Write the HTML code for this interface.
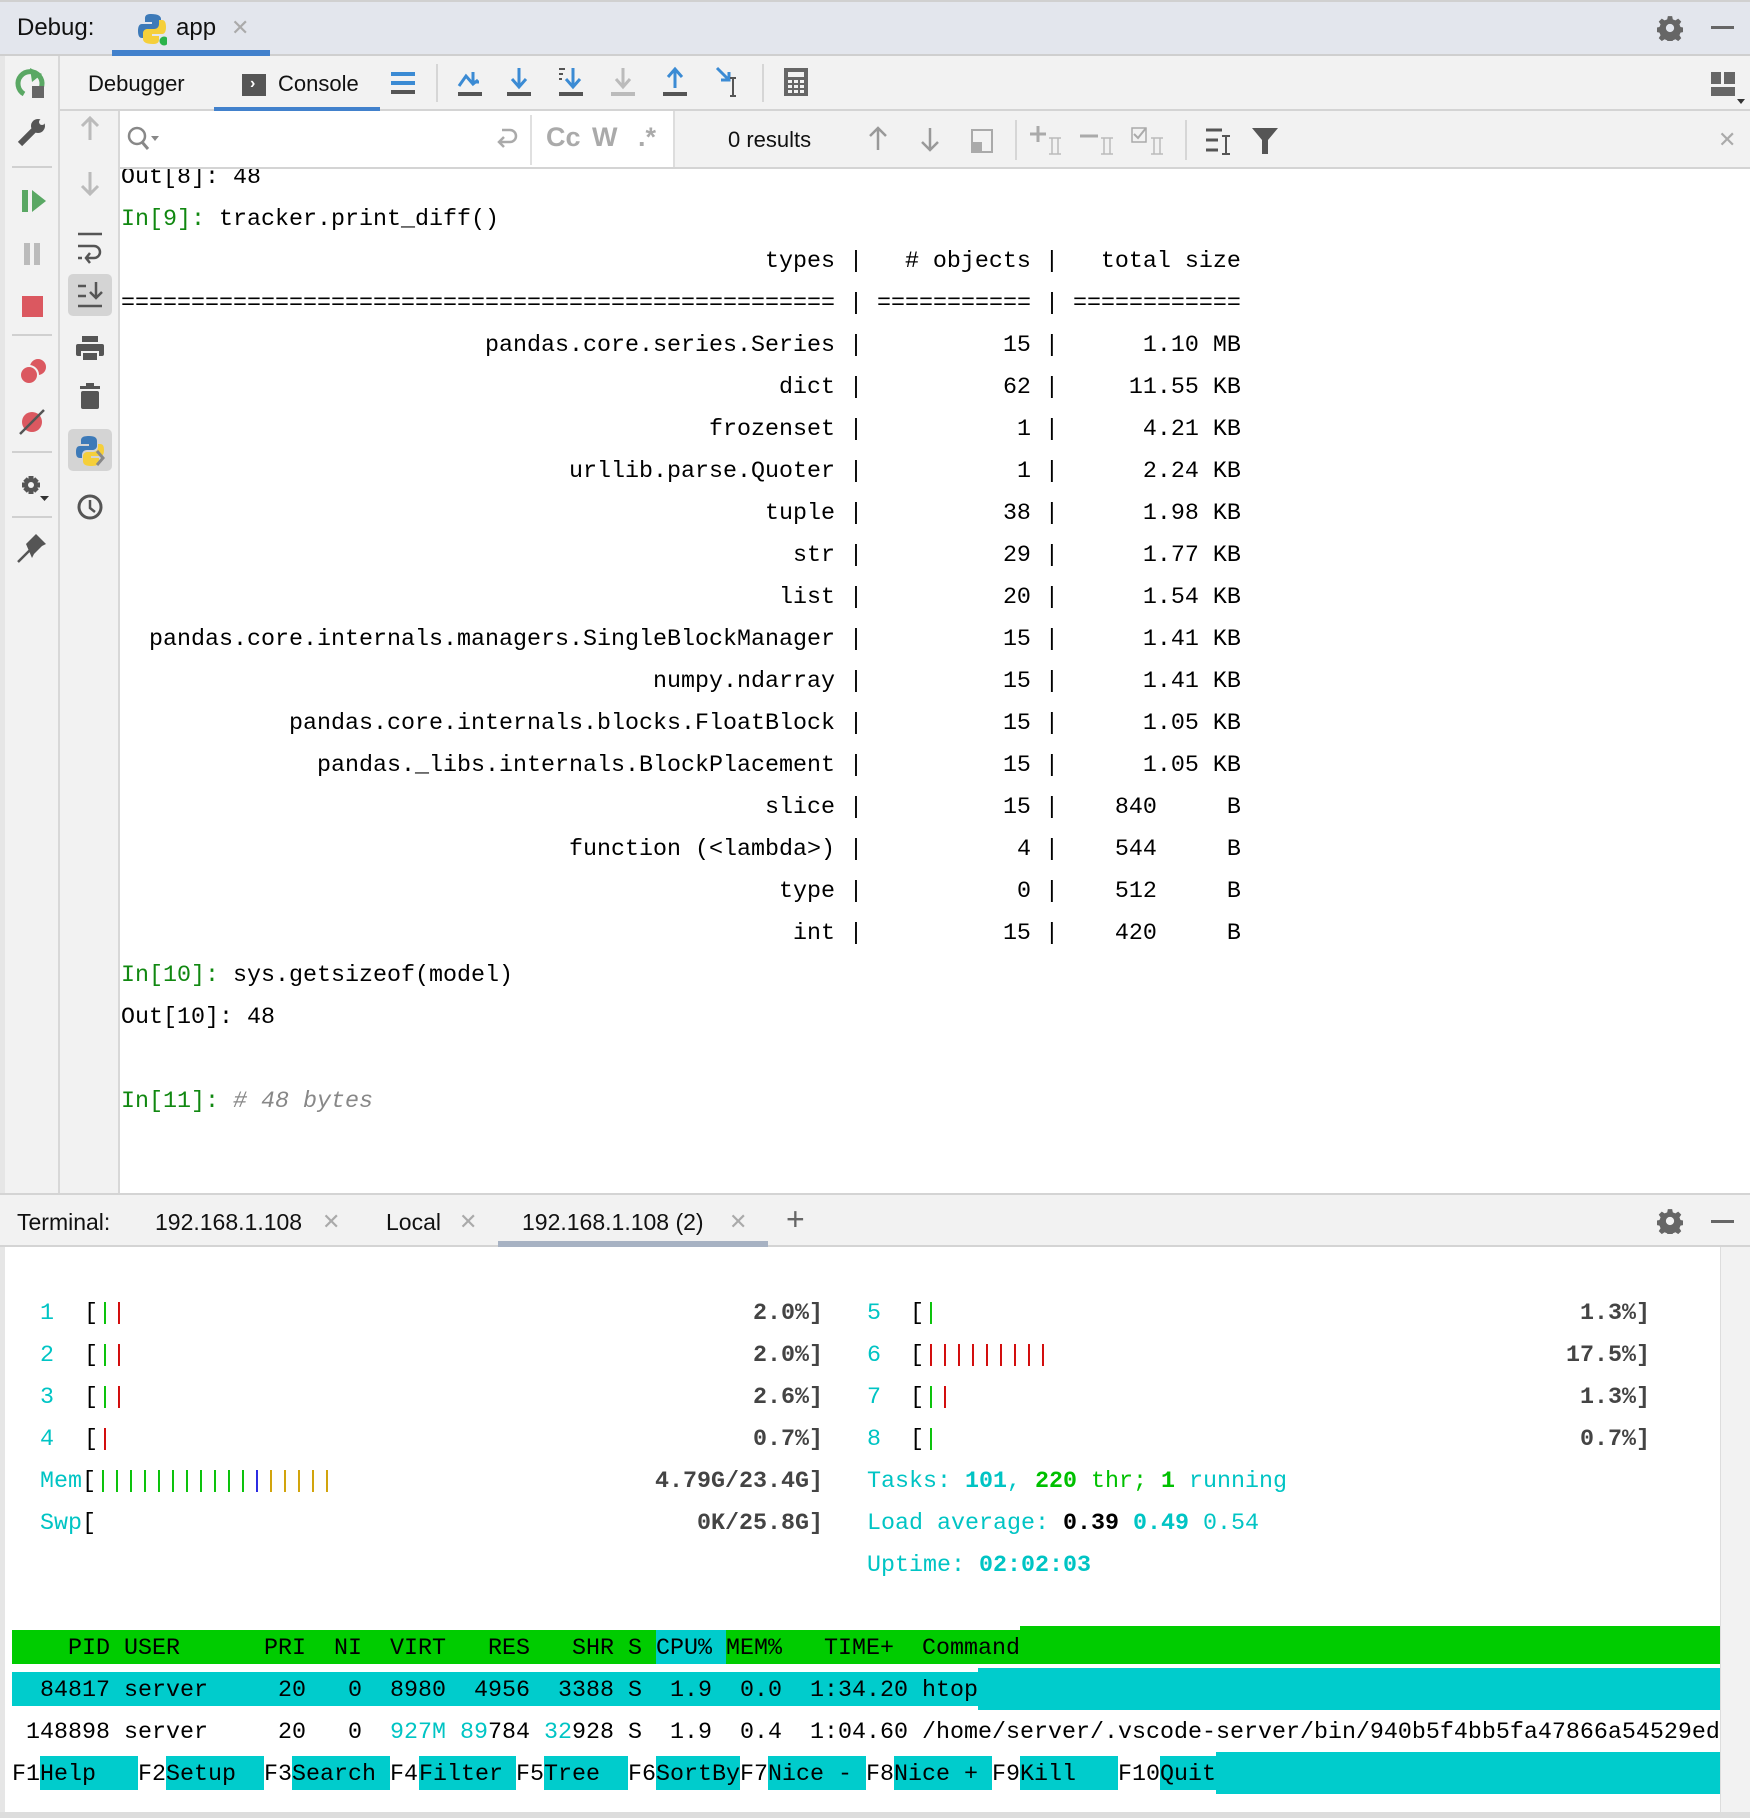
<!DOCTYPE html>
<html><head><meta charset="utf-8"><style>
*{margin:0;padding:0;box-sizing:border-box}
body{width:1750px;height:1818px;position:relative;background:#fff;overflow:hidden;font-family:"Liberation Sans",sans-serif}
.a{position:absolute}
.m{font-family:"Liberation Mono",monospace;font-size:23.33px;white-space:pre;line-height:42px;height:42px;position:absolute}
.ui{font-size:23px;color:#111;position:absolute;line-height:30px}
.g{color:#118811}.cy{color:#00c4c4}.gr{color:#00c000}.rd{color:#d00000}.b{font-weight:bold}
.pc{color:#444}
.x{color:#aaa;font-size:22px}
.r{display:flex}
.r .t{display:inline-block;width:51ch;text-align:right}
.r .o{display:inline-block;width:11ch;text-align:right}
</style></head><body>
<!-- top tab bar -->
<div class="a" style="left:0;top:0;width:1750px;height:56px;background:#e3e6ed;border-top:2px solid #d0d0d0;border-bottom:2px solid #cfcfcf"></div>
<div class="ui" style="left:17px;top:13px;font-size:24px">Debug:</div>
<svg class="a" style="left:137px;top:12px" width="30" height="34" viewBox="0 0 30 34"><path d="M14 2c-6 0-6 3-6 5v3h7v2H5c-3 0-4 3-4 7s1 7 4 7h3v-4c0-3 2-5 5-5h7c2 0 4-2 4-4V7c0-3-3-5-10-5z" fill="#3d7ab8"/><path d="M16 32c6 0 6-3 6-5v-3h-7v-2h10c3 0 4-3 4-7s-1-7-4-7h-3v4c0 3-2 5-5 5h-7c-2 0-4 2-4 4v6c0 3 3 5 10 5z" fill="#f5cf3a"/><circle cx="27" cy="29" r="4.5" fill="#2ab34a"/></svg>
<div class="ui" style="left:176px;top:13px;font-size:24px">app</div>
<div class="ui x" style="left:231px;top:13px">✕</div>
<div class="a" style="left:112px;top:50px;width:158px;height:6px;background:#4281cc"></div>
<svg class="a" style="left:1657px;top:15px" width="26" height="26" viewBox="0 0 24 24"><path d="M10 1h4l.6 3 2.4 1 2.6-1.7 2.8 2.8-1.7 2.6 1 2.4 3 .6v4l-3 .6-1 2.4 1.7 2.6-2.8 2.8-2.6-1.7-2.4 1-.6 3h-4l-.6-3-2.4-1-2.6 1.7-2.8-2.8 1.7-2.6-1-2.4-3-.6v-4l3-.6 1-2.4L1.6 6.1 4.4 3.3 7 5l2.4-1z" fill="#666"/><circle cx="12" cy="12" r="3.8" fill="#e3e6ed"/></svg>
<div class="a" style="left:1711px;top:26px;width:23px;height:3px;background:#666"></div>

<!-- toolbar row -->
<div class="a" style="left:0;top:56px;width:1750px;height:55px;background:#f2f2f2;border-bottom:2px solid #d4d4d4"></div>
<div class="ui" style="left:88px;top:69px;font-size:22px">Debugger</div>
<div class="a" style="left:242px;top:74px;width:24px;height:22px;background:#555"></div>
<div class="a" style="left:250px;top:75px;color:#fff;font-size:16px;font-weight:bold">›</div>
<div class="ui" style="left:278px;top:69px;font-size:22px">Console</div>
<div class="a" style="left:214px;top:107px;width:166px;height:4px;background:#4281cc"></div>
<svg class="a" style="left:390px;top:70px" width="26" height="26"><rect x="1" y="2" width="24" height="4" fill="#3b8bd4"/><rect x="1" y="11" width="24" height="4" fill="#3b8bd4"/><rect x="1" y="20" width="24" height="4" fill="#555"/></svg>
<div class="a" style="left:436px;top:64px;width:2px;height:38px;background:#d6d6d6"></div>
<svg class="a" style="left:455px;top:66px" width="300" height="34">
<g fill="none" stroke="#3b8bd4" stroke-width="3"><path d="M4 20l7-10 7 8 5-4"/><path d="M18 6v10h6"/></g><rect x="3" y="26" width="24" height="4" fill="#555"/>
<g transform="translate(52,0)"><path d="M12 2v18M5 13l7 8 7-8" stroke="#3b8bd4" stroke-width="3" fill="none"/><rect x="0" y="26" width="24" height="4" fill="#555"/></g>
<g transform="translate(104,0)"><path d="M14 2v18M7 13l7 8 7-8" stroke="#3b8bd4" stroke-width="3" fill="none"/><path d="M0 3h6M0 8h4M0 13h3" stroke="#555" stroke-width="2"/><rect x="0" y="26" width="24" height="4" fill="#555"/></g>
<g transform="translate(156,0)"><path d="M12 2v18M5 13l7 8 7-8" stroke="#bbb" stroke-width="3" fill="none"/><rect x="0" y="26" width="24" height="4" fill="#bbb"/></g>
<g transform="translate(208,0)"><path d="M12 22V4M5 11l7-8 7 8" stroke="#3b8bd4" stroke-width="3" fill="none"/><rect x="0" y="26" width="24" height="4" fill="#555"/></g>
<g transform="translate(260,0)"><path d="M2 2l12 12M6 14h8V6" stroke="#3b8bd4" stroke-width="3" fill="none"/><path d="M18 12v18M15 12h6M15 30h6" stroke="#555" stroke-width="2"/></g>
</svg>
<div class="a" style="left:762px;top:64px;width:2px;height:38px;background:#d6d6d6"></div>
<svg class="a" style="left:784px;top:68px" width="24" height="28"><rect x="0" y="0" width="24" height="28" fill="#666"/><rect x="4" y="4" width="16" height="5" fill="#f2f2f2"/><g fill="#f2f2f2"><rect x="4" y="12" width="4" height="3"/><rect x="10" y="12" width="4" height="3"/><rect x="16" y="12" width="4" height="3"/><rect x="4" y="17" width="4" height="3"/><rect x="10" y="17" width="4" height="3"/><rect x="16" y="17" width="4" height="3"/><rect x="4" y="22" width="4" height="3"/><rect x="10" y="22" width="4" height="3"/><rect x="16" y="22" width="4" height="3"/></g></svg>
<svg class="a" style="left:1711px;top:70px" width="36" height="34"><rect x="0" y="2" width="10" height="12" fill="#666"/><rect x="13" y="2" width="11" height="12" fill="#666"/><rect x="0" y="17" width="24" height="9" fill="#666"/><path d="M26 29h8l-4 5z" fill="#333"/></svg>

<!-- search row -->
<div class="a" style="left:120px;top:111px;width:1630px;height:58px;background:#f2f2f2;border-bottom:2px solid #d4d4d4"></div>
<div class="a" style="left:120px;top:111px;width:555px;height:56px;background:#fff;border-right:2px solid #ddd"></div>
<div class="a" style="left:530px;top:115px;width:2px;height:50px;background:#e0e0e0"></div>
<svg class="a" style="left:127px;top:126px" width="36" height="28"><circle cx="10" cy="10" r="8" stroke="#888" stroke-width="2.5" fill="none"/><path d="M15 16l6 7" stroke="#888" stroke-width="3"/><path d="M24 10h8l-4 5z" fill="#888"/></svg>
<svg class="a" style="left:494px;top:126px" width="26" height="28"><path d="M8 4h8a6 6 0 0 1 0 12H6M10 11l-5 5 5 5" stroke="#aaa" stroke-width="2.5" fill="none"/></svg>
<div class="a" style="left:546px;top:122px;color:#aaa;font-size:27px;font-weight:bold">Cc</div>
<div class="a" style="left:592px;top:122px;color:#aaa;font-size:27px;font-weight:bold">W</div>
<div class="a" style="left:638px;top:122px;color:#aaa;font-size:27px;font-weight:bold">.*</div>
<div class="ui" style="left:728px;top:125px;font-size:22px">0 results</div>
<svg class="a" style="left:866px;top:124px" width="500" height="32">
<path d="M12 26V4M4 12l8-8 8 8" stroke="#999" stroke-width="2.5" fill="none"/>
<path d="M64 4v22M56 18l8 8 8-8" stroke="#999" stroke-width="2.5" fill="none"/>
<rect x="106" y="6" width="20" height="22" stroke="#aaa" stroke-width="2" fill="none"/><rect x="106" y="18" width="10" height="10" fill="#aaa"/>
<path d="M172 2v16M164 10h16" stroke="#aaa" stroke-width="3"/><path d="M186 14v16M192 14v16M183 14h12M183 30h12" stroke="#bbb" stroke-width="1.5"/>
<path d="M214 12h18" stroke="#aaa" stroke-width="3"/><path d="M238 14v16M244 14v16M235 14h12M235 30h12" stroke="#bbb" stroke-width="1.5"/>
<rect x="266" y="4" width="14" height="14" stroke="#aaa" stroke-width="1.5" fill="none"/><path d="M268 10l4 4 8-10" stroke="#aaa" stroke-width="2" fill="none"/><path d="M288 14v16M294 14v16M285 14h12M285 30h12" stroke="#bbb" stroke-width="1.5"/>
<path d="M340 6h16M340 16h12M340 26h12" stroke="#555" stroke-width="3"/><path d="M360 12v18M356 12h8M356 30h8" stroke="#555" stroke-width="2"/>
<path d="M386 4h26l-10 12v14h-6V16z" fill="#555"/>
</svg>
<div class="a" style="left:1015px;top:120px;width:2px;height:40px;background:#d6d6d6"></div>
<div class="a" style="left:1185px;top:120px;width:2px;height:40px;background:#d6d6d6"></div>
<div class="ui x" style="left:1718px;top:125px;font-size:22px">✕</div>

<!-- left columns -->
<div class="a" style="left:0;top:56px;width:60px;height:1137px;background:#f2f2f2;border-left:5px solid #e6e6e6;border-right:2px solid #d8d8d8"></div>
<div class="a" style="left:60px;top:111px;width:60px;height:1082px;background:#f2f2f2;border-right:2px solid #d8d8d8"></div>
<svg class="a" style="left:0;top:60px" width="120" height="530">
<path d="M24 34a12 12 0 1 1 12 0" stroke="#5aa864" stroke-width="5" fill="none"/><path d="M30 8l12 6-10 8z" fill="#5aa864"/><rect x="32" y="26" width="12" height="12" fill="#666"/>
<path d="M20 84l16-16" stroke="#555" stroke-width="6"/><circle cx="38" cy="66" r="7" fill="#555"/><circle cx="42" cy="62" r="3" fill="#f2f2f2"/>
<rect x="12" y="106" width="40" height="2" fill="#d0d0d0"/>
<rect x="22" y="130" width="6" height="22" fill="#5aa864"/><path d="M32 130l14 11-14 11z" fill="#5aa864"/>
<rect x="24" y="183" width="6" height="22" fill="#bbb"/><rect x="34" y="183" width="6" height="22" fill="#bbb"/>
<rect x="22" y="236" width="21" height="21" fill="#db5860"/>
<rect x="12" y="274" width="40" height="2" fill="#d0d0d0"/>
<circle cx="38" cy="307" r="8" fill="#db5860"/><circle cx="29" cy="315" r="9" fill="#db5860" stroke="#f2f2f2" stroke-width="2"/>
<circle cx="32" cy="362" r="10" fill="#db5860"/><path d="M20 374l24-24" stroke="#555" stroke-width="2.5"/>
<rect x="12" y="391" width="40" height="2" fill="#d0d0d0"/>
<path d="M31 416v18M22 425h18M25 419l12 12M37 419l-12 12" stroke="#555" stroke-width="5"/><circle cx="31" cy="425" r="7" fill="#555"/><circle cx="31" cy="425" r="3" fill="#f2f2f2"/><path d="M40 436h9l-4.5 5z" fill="#333"/>
<rect x="12" y="456" width="40" height="2" fill="#d0d0d0"/>
<path d="M18 502l12-12" stroke="#555" stroke-width="2.5"/><path d="M26 484l10-10 10 10-4 2-8 8-2 4z" fill="#555"/>
<path d="M90 80V58M82 66l8-8 8 8" stroke="#bbb" stroke-width="3" fill="none"/>
<path d="M90 112v22M82 126l8 8 8-8" stroke="#bbb" stroke-width="3" fill="none"/>
<path d="M78 174h24M78 186h16a6 6 0 0 1 0 12h-8M90 193l-4 5 4 5M78 198h4" stroke="#555" stroke-width="2.5" fill="none"/>
<rect x="68" y="214" width="44" height="42" rx="5" fill="#d4d4d4"/><path d="M78 226h8M78 236h8M78 246h24M96 222v16M90 232l6 6 6-6" stroke="#555" stroke-width="2.5" fill="none"/>
<rect x="82" y="276" width="16" height="6" fill="#555"/><rect x="76" y="284" width="28" height="12" rx="2" fill="#555"/><rect x="82" y="292" width="16" height="9" fill="#555" stroke="#f2f2f2" stroke-width="2"/>
<rect x="80" y="326" width="20" height="3" fill="#555"/><rect x="86" y="323" width="8" height="3" fill="#555"/><rect x="81" y="331" width="18" height="18" rx="2" fill="#555"/>
<rect x="68" y="369" width="44" height="42" rx="5" fill="#d4d4d4"/><path d="M89 376c-7 0-8 2-8 5v3h8v2h-9c-3 0-4 2-4 6s1 6 4 6h2v-3c0-3 2-5 5-5h6c2 0 4-2 4-4v-5c0-3-2-5-8-5z" fill="#3d7ab8"/><path d="M91 406c7 0 8-2 8-5v-3h-8v-2h9c3 0 4-2 4-6s-1-6-4-6h-2v3c0 3-2 5-5 5h-6c-2 0-4 2-4 4v5c0 3 2 5 8 5z" fill="#f5cf3a"/><path d="M97 391l6 7-6 7" stroke="#888" stroke-width="3" fill="none"/>
<circle cx="90" cy="447" r="11" stroke="#555" stroke-width="3" fill="none"/><path d="M90 440v8l5 4" stroke="#555" stroke-width="2.5" fill="none"/>
</svg>

<!-- console -->
<div class="a" style="left:120px;top:169px;width:1630px;height:1024px;overflow:hidden">
<div class="m" style="left:1px;top:-12px">Out[8]: 48</div>
<div class="m" style="left:1px;top:30px"><span class="g">In[9]: </span>tracker.print_diff()</div>
<div class="m r" style="left:1px;top:72px"><span class="t">types</span> | <span class="o"># objects</span> |   total size</div>
<div class="m" style="left:1px;top:114px">=================================================== | =========== | ============</div>
<div class="m r" style="left:1px;top:156px"><span class="t">pandas.core.series.Series</span> | <span class="o">15</span> |      1.10 MB</div>
<div class="m r" style="left:1px;top:198px"><span class="t">dict</span> | <span class="o">62</span> |     11.55 KB</div>
<div class="m r" style="left:1px;top:240px"><span class="t">frozenset</span> | <span class="o">1</span> |      4.21 KB</div>
<div class="m r" style="left:1px;top:282px"><span class="t">urllib.parse.Quoter</span> | <span class="o">1</span> |      2.24 KB</div>
<div class="m r" style="left:1px;top:324px"><span class="t">tuple</span> | <span class="o">38</span> |      1.98 KB</div>
<div class="m r" style="left:1px;top:366px"><span class="t">str</span> | <span class="o">29</span> |      1.77 KB</div>
<div class="m r" style="left:1px;top:408px"><span class="t">list</span> | <span class="o">20</span> |      1.54 KB</div>
<div class="m r" style="left:1px;top:450px"><span class="t">pandas.core.internals.managers.SingleBlockManager</span> | <span class="o">15</span> |      1.41 KB</div>
<div class="m r" style="left:1px;top:492px"><span class="t">numpy.ndarray</span> | <span class="o">15</span> |      1.41 KB</div>
<div class="m r" style="left:1px;top:534px"><span class="t">pandas.core.internals.blocks.FloatBlock</span> | <span class="o">15</span> |      1.05 KB</div>
<div class="m r" style="left:1px;top:576px"><span class="t">pandas._libs.internals.BlockPlacement</span> | <span class="o">15</span> |      1.05 KB</div>
<div class="m r" style="left:1px;top:618px"><span class="t">slice</span> | <span class="o">15</span> |    840     B</div>
<div class="m r" style="left:1px;top:660px"><span class="t">function (&lt;lambda&gt;)</span> | <span class="o">4</span> |    544     B</div>
<div class="m r" style="left:1px;top:702px"><span class="t">type</span> | <span class="o">0</span> |    512     B</div>
<div class="m r" style="left:1px;top:744px"><span class="t">int</span> | <span class="o">15</span> |    420     B</div>
<div class="m" style="left:1px;top:786px"><span class="g">In[10]: </span>sys.getsizeof(model)</div>
<div class="m" style="left:1px;top:828px">Out[10]: 48</div>
<div class="m" style="left:1px;top:912px"><span class="g">In[11]: </span><i style="color:#888"># 48 bytes</i></div>
</div>

<!-- terminal tabs -->
<div class="a" style="left:0;top:1193px;width:1750px;height:54px;background:#f2f2f2;border-top:2px solid #d4d4d4;border-bottom:2px solid #d4d4d4"></div>
<div class="ui" style="left:17px;top:1207px;font-size:23px">Terminal:</div>
<div class="ui" style="left:155px;top:1207px;font-size:23px">192.168.1.108</div>
<div class="ui x" style="left:322px;top:1207px">✕</div>
<div class="ui" style="left:386px;top:1207px;font-size:23px">Local</div>
<div class="ui x" style="left:459px;top:1207px">✕</div>
<div class="ui" style="left:522px;top:1207px;font-size:23px">192.168.1.108 (2)</div>
<div class="ui x" style="left:729px;top:1207px">✕</div>
<div class="ui" style="left:786px;top:1204px;font-size:32px;color:#666">+</div>
<div class="a" style="left:498px;top:1241px;width:270px;height:6px;background:#a7b2c3"></div>
<svg class="a" style="left:1657px;top:1208px" width="26" height="26" viewBox="0 0 24 24"><path d="M10 1h4l.6 3 2.4 1 2.6-1.7 2.8 2.8-1.7 2.6 1 2.4 3 .6v4l-3 .6-1 2.4 1.7 2.6-2.8 2.8-2.6-1.7-2.4 1-.6 3h-4l-.6-3-2.4-1-2.6 1.7-2.8-2.8 1.7-2.6-1-2.4-3-.6v-4l3-.6 1-2.4L1.6 6.1 4.4 3.3 7 5l2.4-1z" fill="#666"/><circle cx="12" cy="12" r="3.8" fill="#f2f2f2"/></svg>
<div class="a" style="left:1711px;top:1220px;width:23px;height:3px;background:#666"></div>

<!-- terminal body -->
<div class="a" style="left:0;top:1247px;width:5px;height:571px;background:#e6e6e6"></div>
<div class="a" style="left:1720px;top:1247px;width:30px;height:571px;background:#f2f2f2;border-left:1px solid #ddd"></div>
<div class="a" style="left:0;top:1812px;width:1750px;height:6px;background:#ddd"></div>

<div class="m cy" style="left:40px;top:1293px">1</div><div class="m" style="left:84px;top:1293px">[<span class="gr">|</span><span class="rd">|</span></div><div class="m pc b" style="left:753px;top:1293px">2.0%]</div>
<div class="m cy" style="left:40px;top:1335px">2</div><div class="m" style="left:84px;top:1335px">[<span class="gr">|</span><span class="rd">|</span></div><div class="m pc b" style="left:753px;top:1335px">2.0%]</div>
<div class="m cy" style="left:40px;top:1377px">3</div><div class="m" style="left:84px;top:1377px">[<span class="gr">|</span><span class="rd">|</span></div><div class="m pc b" style="left:753px;top:1377px">2.6%]</div>
<div class="m cy" style="left:40px;top:1419px">4</div><div class="m" style="left:84px;top:1419px">[<span class="rd">|</span></div><div class="m pc b" style="left:753px;top:1419px">0.7%]</div>
<div class="m" style="left:40px;top:1461px"><span class="cy">Mem</span>[<span class="gr">|||||||||||</span><span style="color:#2020e0">|</span><span style="color:#d0a000">|||||</span></div><div class="m pc b" style="left:655px;top:1461px">4.79G/23.4G]</div>
<div class="m" style="left:40px;top:1503px"><span class="cy">Swp</span>[</div><div class="m pc b" style="left:697px;top:1503px">0K/25.8G]</div>

<div class="m cy" style="left:867px;top:1293px">5</div><div class="m" style="left:910px;top:1293px">[<span class="gr">|</span></div><div class="m pc b" style="left:1580px;top:1293px">1.3%]</div>
<div class="m cy" style="left:867px;top:1335px">6</div><div class="m" style="left:910px;top:1335px">[<span class="rd">|||||||||</span></div><div class="m pc b" style="left:1566px;top:1335px">17.5%]</div>
<div class="m cy" style="left:867px;top:1377px">7</div><div class="m" style="left:910px;top:1377px">[<span class="gr">|</span><span class="rd">|</span></div><div class="m pc b" style="left:1580px;top:1377px">1.3%]</div>
<div class="m cy" style="left:867px;top:1419px">8</div><div class="m" style="left:910px;top:1419px">[<span class="gr">|</span></div><div class="m pc b" style="left:1580px;top:1419px">0.7%]</div>
<div class="m cy" style="left:867px;top:1461px">Tasks: <b>101</b>, <b class="gr">220</b> <span class="gr">thr;</span> <b class="gr">1</b> running</div>
<div class="m cy" style="left:867px;top:1503px">Load average: <b style="color:#000">0.39</b> <b>0.49</b> 0.54</div>
<div class="m cy" style="left:867px;top:1545px">Uptime: <b>02:02:03</b></div>

<div class="a" style="left:12px;top:1630px;width:1008px;height:34px;background:#00cc00"></div>
<div class="a" style="left:1020px;top:1626px;width:700px;height:38px;background:#00cc00"></div>
<div class="a" style="left:656px;top:1630px;width:70px;height:34px;background:#00cccc"></div>
<div class="m" style="left:12px;top:1628px">    PID USER      PRI  NI  VIRT   RES   SHR S CPU% MEM%   TIME+  Command</div>
<div class="a" style="left:12px;top:1672px;width:966px;height:34px;background:#00cccc"></div>
<div class="a" style="left:978px;top:1668px;width:742px;height:42px;background:#00cccc"></div>
<div class="m" style="left:12px;top:1670px">  84817 server     20   0  8980  4956  3388 S  1.9  0.0  1:34.20 htop</div>
<div class="m" style="left:12px;top:1712px"> 148898 server     20   0  <span class="cy">927M</span> <span class="cy">89</span>784 <span class="cy">32</span>928 S  1.9  0.4  1:04.60 /home/server/.vscode-server/bin/940b5f4bb5fa47866a54529ed</div>

<div class="a" style="left:40px;top:1756px;width:98px;height:34px;background:#00cccc"></div>
<div class="a" style="left:166px;top:1756px;width:98px;height:34px;background:#00cccc"></div>
<div class="a" style="left:292px;top:1756px;width:98px;height:34px;background:#00cccc"></div>
<div class="a" style="left:419px;top:1756px;width:97px;height:34px;background:#00cccc"></div>
<div class="a" style="left:544px;top:1756px;width:84px;height:34px;background:#00cccc"></div>
<div class="a" style="left:656px;top:1756px;width:84px;height:34px;background:#00cccc"></div>
<div class="a" style="left:768px;top:1756px;width:98px;height:34px;background:#00cccc"></div>
<div class="a" style="left:894px;top:1756px;width:98px;height:34px;background:#00cccc"></div>
<div class="a" style="left:1020px;top:1756px;width:98px;height:34px;background:#00cccc"></div>
<div class="a" style="left:1160px;top:1756px;width:56px;height:34px;background:#00cccc"></div>
<div class="a" style="left:1216px;top:1752px;width:504px;height:42px;background:#00cccc"></div>
<div class="m" style="left:12px;top:1754px">F1</div><div class="m" style="left:40px;top:1754px">Help</div>
<div class="m" style="left:138px;top:1754px">F2</div><div class="m" style="left:166px;top:1754px">Setup</div>
<div class="m" style="left:264px;top:1754px">F3</div><div class="m" style="left:292px;top:1754px">Search</div>
<div class="m" style="left:390px;top:1754px">F4</div><div class="m" style="left:419px;top:1754px">Filter</div>
<div class="m" style="left:516px;top:1754px">F5</div><div class="m" style="left:544px;top:1754px">Tree</div>
<div class="m" style="left:628px;top:1754px">F6</div><div class="m" style="left:656px;top:1754px">SortBy</div>
<div class="m" style="left:740px;top:1754px">F7</div><div class="m" style="left:768px;top:1754px">Nice -</div>
<div class="m" style="left:866px;top:1754px">F8</div><div class="m" style="left:894px;top:1754px">Nice +</div>
<div class="m" style="left:992px;top:1754px">F9</div><div class="m" style="left:1020px;top:1754px">Kill</div>
<div class="m" style="left:1118px;top:1754px">F10</div><div class="m" style="left:1160px;top:1754px">Quit</div>
</body></html>
